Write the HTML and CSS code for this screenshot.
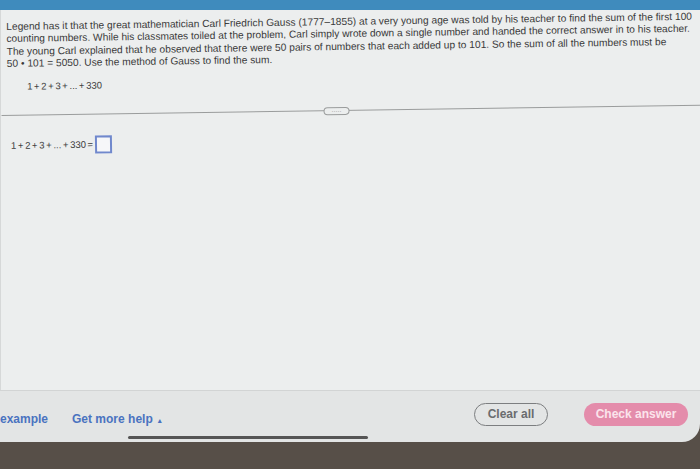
FILE: index.html
```html
<!DOCTYPE html>
<html>
<head>
<meta charset="utf-8">
<link rel="stylesheet" href="styles.css">
</head>
<body>
<div class="screen">
  <div class="topbar"></div>
  <main class="content">
    <div class="sheet">
      <p class="intro">Legend has it that the great mathematician Carl Friedrich Gauss (1777–1855) at a very young age was told by his teacher to find the sum of the first 100<br>counting numbers. While his classmates toiled at the problem, Carl simply wrote down a single number and handed the correct answer in to his teacher.<br>The young Carl explained that he observed that there were 50 pairs of numbers that each added up to 101. So the sum of all the numbers must be<br>50 • 101 = 5050. Use the method of Gauss to find the sum.</p>
      <div class="formula">1 + 2 + 3 + ... + 330</div>
      <div class="divider">
        <span class="pill">·····</span>
      </div>
      <div class="answer">
        <span>1 + 2 + 3 + ... + 330 =</span>
        <span class="box"></span>
      </div>
    </div>
  </main>
  <footer class="footer">
    <div class="footrow">
      <div class="links">
        <span class="link example">example</span>
        <span class="link help">Get more help <span class="caret">▴</span></span>
      </div>
      <div class="buttons">
        <span class="btn clear">Clear all</span>
        <span class="btn check">Check answer</span>
      </div>
    </div>
    <div class="scrollbar"></div>
  </footer>
</div>
</body>
</html>
```

FILE: styles.css
```css
html, body {
  margin: 0;
  padding: 0;
}
body {
  width: 700px;
  height: 469px;
  overflow: hidden;
  background: #574f48;
  font-family: "Liberation Sans", Arial, sans-serif;
}
.screen {
  width: 700px;
  height: 469px;
  display: flex;
  flex-direction: column;
}
.topbar {
  height: 10px;
  background: #3f8bbd;
  flex: none;
}
.content {
  height: 380px;
  flex: none;
  background: #eceeee;
  box-sizing: border-box;
  border-left: 1px solid #d6d8d8;
  overflow: hidden;
}
.sheet {
  padding: 11px 0 0 5px;
  transform: rotate(-0.85deg);
  transform-origin: 0 0;
}
.intro {
  margin: 0;
  font-size: 10.2px;
  line-height: 12.4px;
  color: #3a3a3a;
  white-space: nowrap;
}
.formula {
  margin: 10px 0 0 20px;
  font-size: 9.5px;
  line-height: 11px;
  color: #3a3a3a;
  word-spacing: -1px;
}
.divider {
  margin: 23px 0 0 -6px;
  height: 1px;
  background: #9a9c9c;
  position: relative;
  width: 700px;
}
.pill {
  position: absolute;
  left: 322px;
  top: -3px;
  width: 24px;
  height: 6px;
  border: 1px solid #9a9c9c;
  border-radius: 4px;
  background: #eceeee;
  font-size: 6px;
  line-height: 6px;
  color: #8a8c8c;
  text-align: center;
}
.answer {
  margin: 21px 0 0 3px;
  display: flex;
  align-items: center;
  gap: 2px;
  font-size: 9.5px;
  color: #3a3a3a;
  word-spacing: -1px;
}
.box {
  width: 13px;
  height: 14px;
  border: 2px solid #7088cc;
  background: #f6f7f9;
}
.footer {
  height: 52px;
  flex: none;
  background: #e3e5e5;
  border-top: 1px solid #d2d4d4;
  box-sizing: border-box;
  border-bottom-right-radius: 18px;
  padding-top: 11px;
  display: flex;
  flex-direction: column;
}
.footrow {
  display: flex;
  justify-content: space-between;
  align-items: center;
  height: 24px;
}
.links {
  display: flex;
  gap: 24px;
  margin-left: 0;
  padding-top: 9px;
}
.link {
  font-size: 12px;
  font-weight: bold;
  color: #4a73c0;
}
.caret {
  font-size: 7px;
  color: #4a73c0;
  margin-left: 2px;
}
.buttons {
  display: flex;
  gap: 36px;
  margin-right: 12px;
}
.btn {
  display: flex;
  align-items: center;
  justify-content: center;
  height: 23px;
  box-sizing: border-box;
  border-radius: 12px;
  font-size: 12px;
  font-weight: bold;
}
.clear {
  width: 74px;
  border: 1.5px solid #7c7e80;
  color: #6a6c6e;
}
.check {
  width: 104px;
  background: #e48cab;
  color: #fbe4ec;
}
.scrollbar {
  margin: 10px 0 0 128px;
  width: 240px;
  height: 3px;
  border-radius: 2px;
  background: #555555;
}
```
